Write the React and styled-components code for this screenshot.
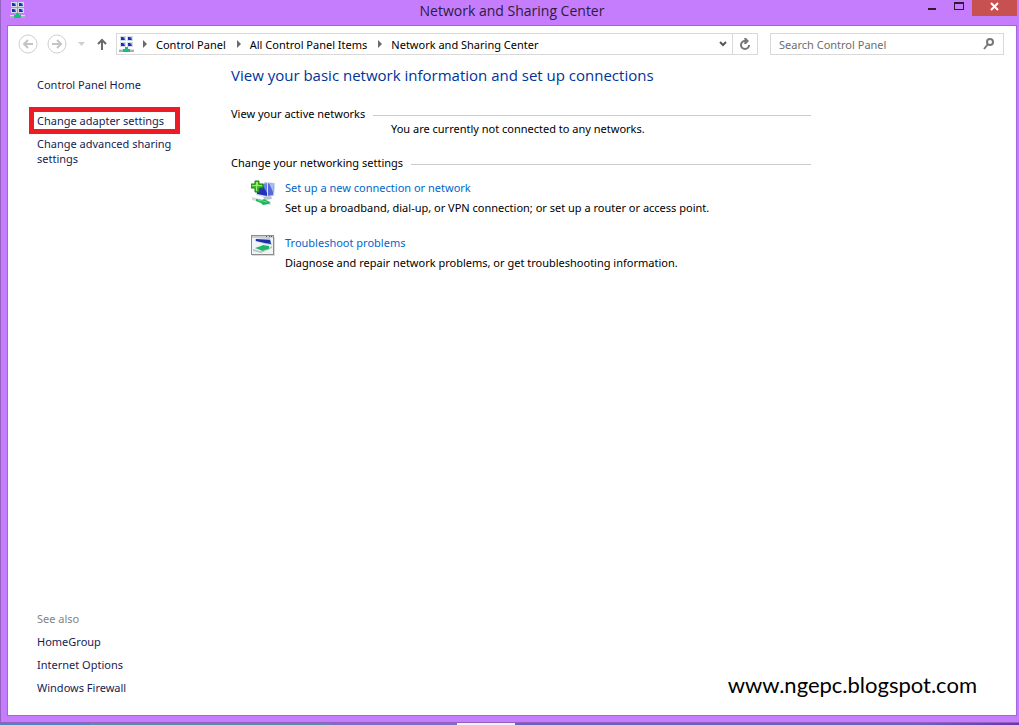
import React from "react";
import styled, { createGlobalStyle } from "styled-components";

const GlobalStyle = createGlobalStyle`
  * {
    box-sizing: border-box;
  }

  body {
    margin: 0;
    font-family: "Noto Sans", "Open Sans", sans-serif;
    font-size: 11px;
    line-height: 15px;
    color: #000;
  }
`;

// window frame
const Desktop = styled.div`
  min-height: 100vh;
  display: flex;
  flex-direction: column;
`;

const Window = styled.div`
  flex: 1;
  display: flex;
  flex-direction: column;
  padding: 0 2px 6px 6px;
  background: #c57dfe;
  border-left: 1px solid #9561c0;
  border-bottom: 1px solid #9561c0;
`;

const TitleBar = styled.header`
  display: grid;
  grid-template-columns: 150px 1fr 150px;
  height: 25px;
`;

const TitleIcon = styled.div`
  padding: 2px 0 0 3px;
`;

const Title = styled.h1`
  margin: 0;
  font-family: "Open Sans", sans-serif;
  font-size: 14px;
  line-height: 21px;
  font-weight: 400;
  text-align: center;
  color: #2b1b3d;
`;

const WindowButtons = styled.div`
  display: flex;
  justify-content: flex-end;
  align-items: flex-start;
`;

const WindowButton = styled.button`
  display: flex;
  justify-content: center;
  width: ${(props) => (props.$close ? "45px" : "27px")};
  height: 16px;
  padding: 0;
  border: 0;
  background: ${(props) => (props.$close ? "#c75050" : "transparent")};
`;

const Client = styled.div`
  flex: 1;
  display: flex;
  flex-direction: column;
  background: #fff;
  border: 1px solid #a563dc;
`;

// navigation row
const Toolbar = styled.nav`
  display: flex;
  align-items: center;
  padding: 7px 12px 0 10px;
`;

const IconButton = styled.button`
  display: flex;
  align-items: center;
  justify-content: center;
  width: ${(props) => props.$width || 29}px;
  height: 22px;
  padding: 0;
  border: 0;
  background: transparent;
`;

const AddressBar = styled.div`
  flex: 1;
  display: flex;
  align-items: center;
  height: 22px;
  margin-right: 12px;
  padding-left: 2px;
  border: 1px solid #d9d9d9;
`;

const Crumbs = styled.ol`
  flex: 1;
  display: flex;
  margin: 0;
  padding: 0;
  list-style: none;
`;

const Crumb = styled.li`
  display: flex;
  align-items: center;

  svg {
    margin: 0 9px 0 10px;
  }

  &:first-child svg {
    margin: 0 9px 0 8px;
  }

  a {
    color: #000;
    text-decoration: none;
  }
`;

const Refresh = styled(IconButton)`
  height: 20px;
  border-left: 1px solid #d9d9d9;
`;

const Search = styled.form`
  display: flex;
  align-items: center;
  width: 234px;
  height: 22px;
  border: 1px solid #d9d9d9;
`;

const SearchInput = styled.input`
  flex: 1;
  min-width: 0;
  padding: 0 8px;
  border: 0;
  outline: 0;
  background: transparent;
  font: inherit;
  color: #6d6d6d;

  &::placeholder {
    color: #6d6d6d;
    opacity: 1;
  }
`;

// page body
const Body = styled.div`
  flex: 1;
  display: flex;
`;

const Sidebar = styled.aside`
  display: flex;
  flex-direction: column;
  align-items: flex-start;
  width: 223px;
  padding: 22px 40px 20px 21px;
`;

const SideLink = styled.a`
  padding: 0 8px;
  color: #151c55;
  text-decoration: none;
`;

const Highlight = styled.div`
  margin: 15px 0 2px;
  padding: 1px 8px 1px 0;
  border: 5px solid #ed1c24;

  a {
    display: block;
    padding: 0 3px;
  }
`;

const SeeAlso = styled.div`
  display: flex;
  flex-direction: column;
  gap: 8px;
  margin-top: auto;
`;

const SeeAlsoTitle = styled.span`
  padding: 0 8px;
  color: #838383;
`;

const Main = styled.main`
  flex: 1;
  display: flex;
  flex-direction: column;
  padding: 9px 39px 16px 0;
`;

const Heading = styled.h2`
  margin: 0 0 20px;
  font-family: "Open Sans", sans-serif;
  font-size: 15px;
  line-height: 22px;
  font-weight: 400;
  color: #003399;
`;

const Sections = styled.div`
  max-width: 580px;
`;

const SectionTitle = styled.h3`
  display: flex;
  align-items: center;
  gap: 8px;
  margin: 0;
  font-size: 11px;
  font-weight: 400;

  &::after {
    content: "";
    flex: 1;
    height: 1px;
    margin-top: 4px;
    background: #ccc;
  }
`;

const Status = styled.p`
  margin: 0 0 19px;
  padding-left: 160px;
`;

const Task = styled.div`
  display: flex;
  gap: 10px;
  margin-top: 10px;
  padding-left: 20px;

  & + & {
    margin-top: 20px;
  }

  p {
    margin: 5px 0 0;
  }
`;

const TaskLink = styled.a`
  color: #0066cc;
  text-decoration: none;
`;

const Watermark = styled.p`
  align-self: flex-end;
  margin: auto 0 0;
  font-family: Lato, sans-serif;
  font-size: 22px;
  line-height: 28px;
`;

const Taskbar = styled.footer`
  height: 2px;
  background: linear-gradient(
    90deg,
    #4a86c0 0 90px,
    #5b8ba5 90px 330px,
    #7b70c8 330px 457px,
    #f4f2fb 457px 515px,
    #6464c8 515px 90%,
    #6a35b8
  );
`;

const screens = [
  [1, 0],
  [8, 0],
  [1, 6],
  [8, 6],
];

const NetworkIcon = () => (
  <svg width="15" height="16" viewBox="0 0 15 16" aria-hidden="true">
    {screens.map(([x, y]) => (
      <g key={`${x}-${y}`}>
        <rect x={x} y={y} width="6" height="5" fill="#d5dbe4" />
        <rect x={x + 1} y={y + 1} width="4" height="3" fill="#1a2fb4" />
        <path d={`M${x + 3} ${y + 1}h2v3z`} fill="#78a5ec" />
      </g>
    ))}
    <rect y="13" width="15" height="3" fill="#a8b0b4" />
    <rect y="13" width="15" height="1" fill="#dde2e4" />
    <path d="M6 11h3v2h2v3H4v-3h2z" fill="#12c27a" />
  </svg>
);

const Chevron = () => (
  <svg width="5" height="8" viewBox="0 0 5 8" aria-hidden="true">
    <path d="M1 0l4 4-4 4z" fill="#6a6a6a" />
  </svg>
);

const RoundArrow = ({ flip }) => (
  <svg width="20" height="20" viewBox="0 0 20 20" fill="none" aria-hidden="true">
    <circle cx="10" cy="10" r="9" stroke="#cfcfcf" />
    <path
      d={flip ? "M5 10h9M10 6l4 4-4 4" : "M15 10H6M10 6l-4 4 4 4"}
      stroke="#c4c4c4"
      strokeWidth="2"
    />
  </svg>
);

const ConnectionIcon = () => (
  <svg width="24" height="26" viewBox="0 0 24 26" aria-hidden="true">
    <path d="M13 2l11 1-1 13-8 1z" fill="#c3d0ea" />
    <path d="M15 3l8 1-1 11-6 1z" fill="#5468dc" />
    <path d="M18 3l5 1-1 8z" fill="#a9bdf4" />
    <path d="M5 4l12-1v15L5 15z" fill="#d7e0f0" />
    <path d="M6 5l10-1v12L6 14z" fill="#2232bd" />
    <path d="M11 4l5-1v10z" fill="#6b86e6" />
    <path d="M12 17l8-1 1 3-7 1z" fill="#b9c1ce" />
    <path d="M1 17l19 5v3L1 20z" fill="#d4dadd" />
    <path d="M5 19l6 1 2-1 6 3-1 2-6 1-2-2-5-2z" fill="#18b558" />
    <path d="M7 20l9 2" stroke="#6adf91" />
    <path d="M4 1h4v3h4v4H8v4H4V8H0V4h4z" fill="#3fbd22" stroke="#16810f" />
    <path d="M5 2h2v3h4v1H6v5H5V6H1V5h4z" fill="#9bea7c" />
  </svg>
);

const TroubleshootIcon = () => (
  <svg width="24" height="22" viewBox="0 0 24 22" aria-hidden="true">
    <path d="M1 20h22V2h1v19H1z" fill="#dcdcdc" />
    <rect x=".5" y=".5" width="22" height="19" fill="#f1f4f6" stroke="#8c8c8c" />
    <path d="M1 1h21v2H1z" fill="#c9ced3" />
    <path d="M15 1h1v1h-1zM18 1h1v1h-1zM20 1h1v1h-1z" fill="#555" />
    <path d="M4 4l15-1 2 7-7-1-10-3z" fill="#b8c6e2" />
    <path d="M5 4l14 1 1 4-6-1-9-2z" fill="#1d2fa6" />
    <path d="M2 14l7 2 12-5v2l-11 5-8-2z" fill="#bcc5cb" />
    <path d="M4 13l6-2 2-1 6 1v3l-5 1-1 1z" fill="#1fb765" />
  </svg>
);

const crumbs = ["Control Panel", "All Control Panel Items", "Network and Sharing Center"];

const App = () => {
  return (
    <Desktop>
      <GlobalStyle />
      <Window>
        <TitleBar>
          <TitleIcon>
            <NetworkIcon />
          </TitleIcon>
          <Title>Network and Sharing Center</Title>
          <WindowButtons>
            <WindowButton aria-label="Minimize">
              <svg width="8" height="12">
                <path d="M0 8h8v2H0z" fill="#2a1a33" />
              </svg>
            </WindowButton>
            <WindowButton aria-label="Maximize">
              <svg width="10" height="12">
                <path d="M0 2h10v8H0zM1 4v5h8V4z" fill="#2a1a33" fillRule="evenodd" />
              </svg>
            </WindowButton>
            <WindowButton $close aria-label="Close">
              <svg width="9" height="12">
                <path d="M1 3l7 7M8 3l-7 7" stroke="#fff" strokeWidth="2" />
              </svg>
            </WindowButton>
          </WindowButtons>
        </TitleBar>

        <Client>
          <Toolbar>
            <IconButton $width={20} aria-label="Back">
              <RoundArrow />
            </IconButton>
            <IconButton $width={38} aria-label="Forward">
              <RoundArrow flip />
            </IconButton>
            <IconButton $width={11} aria-label="Recent locations">
              <svg width="7" height="4">
                <path d="M0 0h7L3.500 4z" fill="#cfcfcf" />
              </svg>
            </IconButton>
            <IconButton $width={29} aria-label="Up">
              <svg width="10" height="12" fill="none">
                <path d="M5 12V2M1 6l4-4 4 4" stroke="#6a6a6a" strokeWidth="2" />
              </svg>
            </IconButton>
            <AddressBar>
              <NetworkIcon />
              <Crumbs>
                {crumbs.map((crumb) => (
                  <Crumb key={crumb}>
                    <Chevron />
                    <a href="#">{crumb}</a>
                  </Crumb>
                ))}
              </Crumbs>
              <IconButton $width={18} aria-label="Previous locations">
                <svg width="8" height="6" fill="none">
                  <path d="M1 1l3 3 3-3" stroke="#5a5a5a" strokeWidth="2" />
                </svg>
              </IconButton>
              <Refresh $width={25} aria-label="Refresh">
                <svg width="12" height="13" fill="none">
                  <path d="M6 3a4 4 0 1 0 4 4" stroke="#777" strokeWidth="2" />
                  <path d="M5 0h2l3 3-3 3H5l1-3z" fill="#777" />
                </svg>
              </Refresh>
            </AddressBar>
            <Search>
              <SearchInput type="search" aria-label="Search Control Panel" placeholder="Search Control Panel" />
              <IconButton aria-label="Search">
                <svg width="12" height="12" fill="none">
                  <circle cx="7" cy="4" r="3" stroke="#777" strokeWidth="2" />
                  <path d="M5 6l-4 5" stroke="#777" strokeWidth="2" />
                </svg>
              </IconButton>
            </Search>
          </Toolbar>

          <Body>
            <Sidebar>
              <SideLink href="#">Control Panel Home</SideLink>
              <Highlight>
                <SideLink href="#">Change adapter settings</SideLink>
              </Highlight>
              <SideLink href="#">Change advanced sharing settings</SideLink>
              <SeeAlso>
                <SeeAlsoTitle>See also</SeeAlsoTitle>
                <SideLink href="#">HomeGroup</SideLink>
                <SideLink href="#">Internet Options</SideLink>
                <SideLink href="#">Windows Firewall</SideLink>
              </SeeAlso>
            </Sidebar>

            <Main>
              <Heading>View your basic network information and set up connections</Heading>
              <Sections>
                <SectionTitle>View your active networks</SectionTitle>
                <Status>You are currently not connected to any networks.</Status>
                <SectionTitle>Change your networking settings</SectionTitle>
                <Task>
                  <ConnectionIcon />
                  <div>
                    <TaskLink href="#">Set up a new connection or network</TaskLink>
                    <p>Set up a broadband, dial-up, or VPN connection; or set up a router or access point.</p>
                  </div>
                </Task>
                <Task>
                  <TroubleshootIcon />
                  <div>
                    <TaskLink href="#">Troubleshoot problems</TaskLink>
                    <p>Diagnose and repair network problems, or get troubleshooting information.</p>
                  </div>
                </Task>
              </Sections>
              <Watermark>www.ngepc.blogspot.com</Watermark>
            </Main>
          </Body>
        </Client>
      </Window>
      <Taskbar />
    </Desktop>
  );
};

export default App;
